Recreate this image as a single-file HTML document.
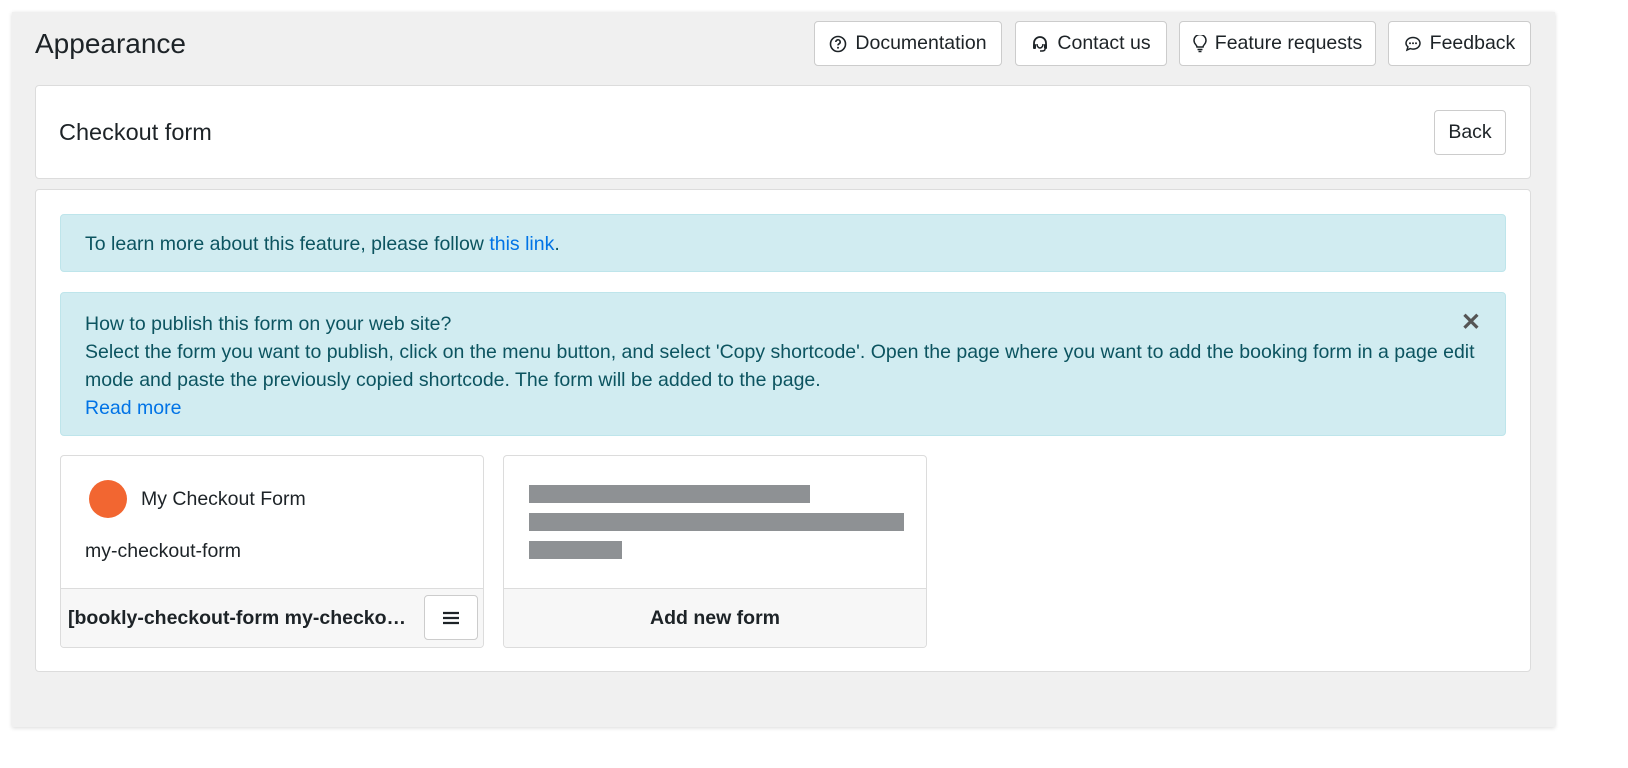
<!DOCTYPE html>
<html><head><style>
*{box-sizing:border-box;margin:0;padding:0}
body{width:1628px;height:768px;background:#fff;font-family:"Liberation Sans",sans-serif;color:#1d2327;position:relative;overflow:hidden}
.wrap{position:absolute;left:12px;top:12px;width:1543px;height:715px;background:#f0f0f0;box-shadow:0 1px 4px rgba(0,0,0,.15)}
.abs{position:absolute}
h1{position:absolute;left:35px;top:28px;font-size:28px;font-weight:400;color:#1d2327}
.btn{position:absolute;top:21px;height:45px;background:#fff;border:1px solid #ccc;border-radius:4px;font-size:19.5px;display:flex;align-items:center;justify-content:center;gap:8px;color:#1d2327;white-space:nowrap}
.box{position:absolute;background:#fff;border:1px solid #dcdcdc;border-radius:4px}
.alert{position:absolute;left:60px;width:1446px;background:#d1ecf1;border:1px solid #bee5eb;border-radius:4px;color:#0c5460;font-size:19.5px;line-height:28px;padding:0 24px}
a{color:#0073e6;text-decoration:none}
.card{position:absolute;top:455px;height:193px;width:424px;border:1px solid #dcdcdc;border-radius:4px;background:#fff;overflow:hidden}
.foot{position:absolute;left:0;right:0;bottom:0;height:59px;background:#f7f7f7;border-top:1px solid #dcdcdc;display:flex;align-items:center;font-weight:bold;font-size:19.5px;white-space:nowrap}
.bar{position:absolute;background:#8e9194;height:18px}
</style></head><body>
<div class="wrap"></div>
<h1>Appearance</h1>
<div class="btn" style="left:814px;width:188px"><svg width="18" height="18" viewBox="0 0 18 18"><circle cx="9" cy="9" r="7.5" fill="none" stroke="#1d2327" stroke-width="1.6"/><path d="M6.8 7a2.2 2.2 0 1 1 3 2c-.7.3-.8.8-.8 1.4" fill="none" stroke="#1d2327" stroke-width="1.6"/><circle cx="9" cy="12.8" r="1" fill="#1d2327"/></svg>Documentation</div>
<div class="btn" style="left:1015px;width:152px"><svg width="18" height="18" viewBox="0 0 18 18"><path d="M3 10V8a6 6 0 0 1 12 0v2" fill="none" stroke="#1d2327" stroke-width="1.8"/><rect x="2" y="9" width="3" height="5" rx="1" fill="#1d2327"/><rect x="13" y="9" width="3" height="5" rx="1" fill="#1d2327"/><path d="M6 9a3 4 0 0 0 6 0" fill="none" stroke="#1d2327" stroke-width="1.5"/><path d="M14 14c0 2-2 2-5 2" fill="none" stroke="#1d2327" stroke-width="1.5"/></svg>Contact us</div>
<div class="btn" style="left:1179px;width:197px"><svg width="14" height="18" viewBox="0 0 14 18"><path d="M4 12c0-2-3-3-3-6.5a6 6 0 0 1 12 0C13 9 10 10 10 12z" fill="none" stroke="#1d2327" stroke-width="1.5"/><path d="M4.5 14.5h5M5.5 16.5h3" stroke="#1d2327" stroke-width="1.5"/></svg>Feature requests</div>
<div class="btn" style="left:1388px;width:143px"><svg width="18" height="18" viewBox="0 0 18 18"><path d="M9 2.5c4 0 7 2.6 7 5.8s-3 5.8-7 5.8c-1 0-2-.2-2.8-.5L3 15l.9-3.2C2.7 10.8 2 9.6 2 8.3 2 5.1 5 2.5 9 2.5z" fill="none" stroke="#1d2327" stroke-width="1.5"/><circle cx="6" cy="8.3" r="1" fill="#1d2327"/><circle cx="9" cy="8.3" r="1" fill="#1d2327"/><circle cx="12" cy="8.3" r="1" fill="#1d2327"/></svg>Feedback</div>
<div class="box" style="left:35px;top:85px;width:1496px;height:94px"></div>
<div class="abs" style="left:59px;top:119px;font-size:23.5px">Checkout form</div>
<div class="btn" style="left:1434px;top:110px;width:72px;height:45px">Back</div>
<div class="box" style="left:35px;top:189px;width:1496px;height:483px"></div>
<div class="alert" style="top:214px;height:58px;padding-top:15px">To learn more about this feature, please follow <a>this link</a>.</div>
<div class="alert" style="top:292px;height:144px;padding-top:17px;padding-right:26px">How to publish this form on your web site?<br>Select the form you want to publish, click on the menu button, and select 'Copy shortcode'. Open the page where you want to add the booking form in a page edit mode and paste the previously copied shortcode. The form will be added to the page.<br><a>Read more</a>
<div class="abs" style="right:24px;top:16px;font-size:24px;color:#555;font-weight:bold">✕</div></div>
<div class="card" style="left:60px">
<div class="abs" style="left:28px;top:24px;width:38px;height:38px;border-radius:50%;background:#f26631"></div>
<div class="abs" style="left:80px;top:32px;font-size:19.5px">My Checkout Form</div>
<div class="abs" style="left:24px;top:84px;font-size:19.5px">my-checkout-form</div>
<div class="foot" style="padding-left:7px">[bookly-checkout-form my-checko…
<div class="abs" style="left:363px;top:6px;width:54px;height:45px;border:1px solid #ccc;border-radius:4px;background:#fff;display:flex;align-items:center;justify-content:center"><svg width="18" height="16"><path d="M1 3h16M1 8h16M1 13h16" stroke="#1d2327" stroke-width="2.2"/></svg></div></div>
</div>
<div class="card" style="left:503px">
<div class="bar" style="left:25px;top:29px;width:281px"></div>
<div class="bar" style="left:25px;top:57px;width:375px"></div>
<div class="bar" style="left:25px;top:85px;width:93px"></div>
<div class="foot" style="justify-content:center">Add new form</div>
</div>
</body></html>
